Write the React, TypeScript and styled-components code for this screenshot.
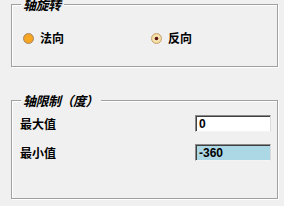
import React from 'react'
import styled, { createGlobalStyle } from 'styled-components'

const GlobalStyle = createGlobalStyle`
  html, body {
    margin: 0;
    padding: 0;
    background: #f0f0f0;
  }
  body {
    font-family: "Liberation Sans", "Noto Sans CJK SC", sans-serif;
    font-size: 12px;
    color: #000;
  }
`

const Page = styled.div`
  width: 284px;
  height: 206px;
  box-sizing: border-box;
  padding: 4px 0 0 11px;
  display: flex;
  flex-direction: column;
  gap: 33px;
  overflow: hidden;
`

const Group = styled.div<{ $h: number }>`
  position: relative;
  box-sizing: border-box;
  width: 267px;
  height: ${(p) => p.$h}px;
  border: 1px solid #a0a0a0;
  box-shadow: 1px 1px 0 #ffffff, inset 1px 1px 0 #ffffff;
`

const Legend = styled.span`
  position: absolute;
  top: -8px;
  left: 9px;
  padding: 0 3px 0 2px;
  background: #f0f0f0;
  font-family: "Noto Sans CJK SC", sans-serif;
  font-size: 13px;
  font-weight: 700;
  font-style: italic;
  line-height: 15px;
  letter-spacing: -0.5px;
`

const RadioRow = styled.div`
  display: grid;
  grid-template-columns: 128px auto;
  padding: 26px 0 0 11px;
`

const RadioItem = styled.label`
  display: flex;
  align-items: center;
  gap: 6px;
  height: 14px;
  font-family: "Noto Sans CJK SC", sans-serif;
  font-weight: 700;
  font-size: 12px;
  line-height: 14px;
`

const Fields = styled.div`
  display: grid;
  grid-template-columns: 1fr 76px;
  row-gap: 12px;
  align-items: center;
  padding: 14px 6px 0 8px;
`

const FieldLabel = styled.span`
  font-family: "Noto Sans CJK SC", sans-serif;
  font-weight: 700;
  font-size: 12px;
  line-height: 14px;
`

const Input = styled.div<{ $selected?: boolean }>`
  box-sizing: border-box;
  height: 17px;
  padding: 1px 0 0 3px;
  background: ${(p) => (p.$selected ? '#acd8e6' : '#ffffff')};
  border-top: 1px solid #8a8a8a;
  border-left: 1px solid #8a8a8a;
  border-bottom: 1px solid #f4f4f4;
  border-right: 1px solid #dcdcdc;
  box-shadow: inset 1px 1px 0 #404040;
  font-family: "Liberation Sans", sans-serif;
  font-weight: 700;
  font-size: 12px;
  line-height: 14px;
  color: #000;
`

function RadioIcon({ checked }: { checked?: boolean }) {
  return (
    <svg width="11" height="11" viewBox="0 0 11 11">
      {checked ? (
        <>
          <circle cx="5.5" cy="5.5" r="5" fill="#f3d9a0" stroke="#c4a270" strokeWidth="1" />
          <circle cx="5.5" cy="5.5" r="3.4" fill="#f7e4b0" />
          <circle cx="5.5" cy="5.5" r="1.8" fill="#5a1410" />
        </>
      ) : (
        <>
          <circle cx="5.5" cy="5.5" r="5" fill="#f3a22a" stroke="#a88860" strokeWidth="1" />
          <circle cx="5.5" cy="5.5" r="3.2" fill="#f8a820" />
        </>
      )}
    </svg>
  )
}

export default function App() {
  return (
    <>
      <GlobalStyle />
      <Page>
        <Group $h={63}>
          <Legend>轴旋转</Legend>
          <RadioRow>
            <RadioItem>
              <RadioIcon />
              法向
            </RadioItem>
            <RadioItem>
              <RadioIcon checked />
              反向
            </RadioItem>
          </RadioRow>
        </Group>
        <Group $h={99}>
          <Legend>轴限制（度）</Legend>
          <Fields>
            <FieldLabel>最大值</FieldLabel>
            <Input>0</Input>
            <FieldLabel>最小值</FieldLabel>
            <Input $selected>-360</Input>
          </Fields>
        </Group>
      </Page>
    </>
  )
}
